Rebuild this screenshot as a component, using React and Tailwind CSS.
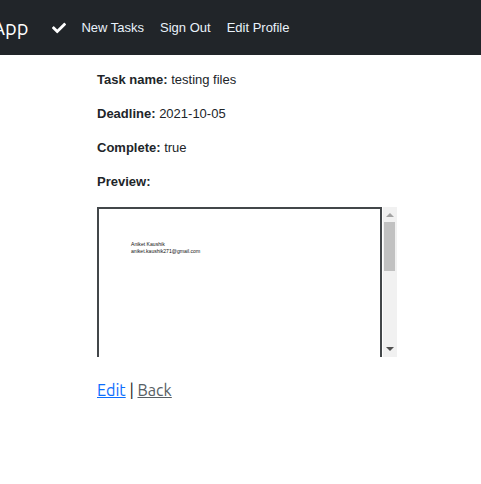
import React from 'react';
import { FaCheck } from 'react-icons/fa';

const Field = ({ label, value }) => (
  <p className="h-6 mb-2.5 leading-6">
    <b className="font-bold">{label}</b>{value ? ` ${value}` : ''}
  </p>
);

const Preview = () => (
  <div className="flex w-[300px] h-[150px] bg-white">
    {/* Document */}
    <div className="w-[285px] border-2 border-b-0 border-[#43474a] pl-8 pt-[32px] font-['Liberation_Sans',sans-serif] text-[5.1px] leading-[7px] text-[#111]">
      <div>Aniket Kaushik</div>
      <div>aniket.kaushik271@gmail.com</div>
    </div>
    {/* Scrollbar */}
    <div className="ml-px w-[14px] flex flex-col items-center bg-[#f1f1f1] pt-[15px] relative">
      <span className="absolute top-[6px] w-0 h-0 border-x-[4px] border-x-transparent border-b-[4px] border-b-[#a3a3a3]" />
      <div className="self-start ml-px w-[11px] h-[49px] bg-[#c1c1c1]" />
      <span className="absolute bottom-[6px] w-0 h-0 border-x-[4px] border-x-transparent border-t-[4px] border-t-[#505050]" />
    </div>
  </div>
);

export default function App() {
  return (
    <div className="h-[484px] w-[481px] overflow-hidden bg-white font-['Liberation_Sans',sans-serif] text-[#212529]">
      <nav className="flex items-center h-[55px] bg-[#212529] text-white">
        <a className="-ml-[8px] text-xl font-['Ubuntu','Noto_Sans',sans-serif]">App</a>
        <FaCheck size={14} className="ml-[24px] text-white" />
        <div className="flex gap-4 ml-[15px] text-[13px] text-[#e9f2fb]">
          <a>New Tasks</a>
          <a>Sign Out</a>
          <a>Edit Profile</a>
        </div>
      </nav>
      <main className="pl-[97px] pt-[13px] text-[13px]">
        <Field label="Task name:" value="testing files" />
        <Field label="Deadline:" value="2021-10-05" />
        <Field label="Complete:" value="true" />
        <Field label="Preview:" />
        <div className="mt-[13px]">
          <Preview />
        </div>
        <div className="mt-[21px] text-[16.2px] leading-6 font-['Ubuntu','Noto_Sans',sans-serif]">
          <a className="text-[#0d6efd] underline">Edit</a> | <a className="text-[#565e64] underline">Back</a>
        </div>
      </main>
    </div>
  );
}
